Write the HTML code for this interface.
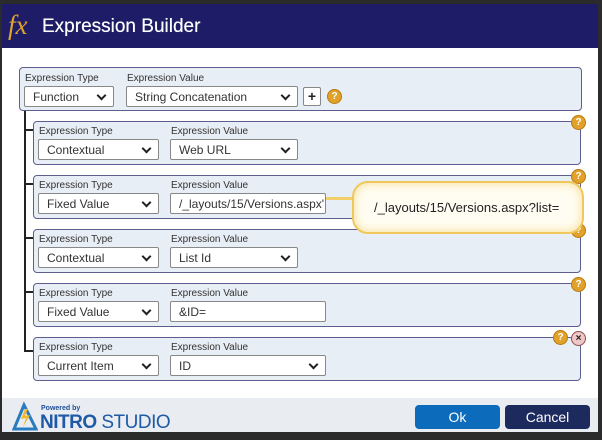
<!DOCTYPE html><html><head><style>
*{box-sizing:border-box;margin:0;padding:0}
body{width:602px;height:440px;background:#2b2b2b;font-family:"Liberation Sans",Arial,sans-serif;position:relative;overflow:hidden}
.dlg{position:absolute;left:2px;top:4px;width:596px;height:428px;background:#fff}
.title{position:absolute;left:0;top:0;width:596px;height:44px;background:#1e1c66;color:#fff;font-size:19px}
.title .fx{position:absolute;left:6px;top:6px;font-family:"Liberation Serif",serif;font-style:italic;color:#e0a52a;font-size:27px}
.title .t{position:absolute;left:40px;top:12px;font-weight:500;text-shadow:0 0 0.4px #fff}
.p{position:absolute;background:#e8eef5;border:1.5px solid #5e5e8e;border-radius:4px}
.lab{position:absolute;font-size:10px;color:#333}
.sel{position:absolute;height:21px;background:#fff;border:1px solid #888;border-radius:2px;font-size:12px;color:#333;padding:3px 0 0 8px}
.sel.d::after{content:"";position:absolute;right:8px;top:5px;width:5px;height:5px;border-right:2px solid #222;border-bottom:2px solid #222;transform:rotate(45deg)}
.q{position:absolute;width:15px;height:15px;border-radius:50%;background:#e2a22a;border:1px solid #b77a10;color:#fff;font-size:10px;font-weight:bold;text-align:center;line-height:13px}
.x{position:absolute;width:15px;height:15px;border-radius:50%;background:#f0c6c6;border:1px solid #8a5050;color:#222;font-size:10px;font-weight:bold;text-align:center;line-height:13px}
.ln{position:absolute;background:#222}
.foot{position:absolute;left:2px;top:398px;width:596px;height:34px;background:#e9ecf0}
.btn{position:absolute;top:405px;height:24px;border-radius:4px;color:#fff;font-size:14px;text-align:center;line-height:24px}
</style></head><body>
<div class="dlg">
<div class="title"><span class="fx">fx</span><span class="t">Expression Builder</span></div>
</div>
<div class="ln" style="left:24px;top:110px;width:2px;height:242px"></div>
<div class="ln" style="left:24px;top:129px;width:10px;height:2px"></div>
<div class="ln" style="left:24px;top:183px;width:10px;height:2px"></div>
<div class="ln" style="left:24px;top:237px;width:10px;height:2px"></div>
<div class="ln" style="left:24px;top:291px;width:10px;height:2px"></div>
<div class="ln" style="left:24px;top:350px;width:10px;height:2px"></div>

<div class="p" style="left:19px;top:67px;width:563px;height:44px"></div>
<div class="lab" style="left:25px;top:73px">Expression Type</div>
<div class="lab" style="left:127px;top:73px">Expression Value</div>
<div class="sel d" style="left:24px;top:86px;width:90px">Function</div>
<div class="sel d" style="left:126px;top:86px;width:172px">String Concatenation</div>
<div class="sel" style="left:303px;top:87px;width:18px;height:19px;padding:0;text-align:center;font-weight:bold;font-size:14px;line-height:16px;color:#222">+</div>
<div class="q" style="left:327px;top:89px">?</div>

<div class="p" style="left:33px;top:121px;width:548px;height:44px"></div>
<div class="lab" style="left:39px;top:126px">Expression Type</div><div class="lab" style="left:171px;top:126px">Expression Value</div>
<div class="sel d" style="left:38px;top:139px;width:121px">Contextual</div>
<div class="sel d" style="left:170px;top:139px;width:128px">Web URL</div>
<div class="q" style="left:571px;top:115px">?</div>

<div class="p" style="left:33px;top:175px;width:548px;height:44px"></div>
<div class="lab" style="left:39px;top:180px">Expression Type</div><div class="lab" style="left:171px;top:180px">Expression Value</div>
<div class="sel d" style="left:38px;top:193px;width:121px">Fixed Value</div>
<div class="sel" style="left:170px;top:193px;width:156px;overflow:hidden;white-space:nowrap">/_layouts/15/Versions.aspx'</div>
<div class="q" style="left:571px;top:169px">?</div>

<div class="p" style="left:33px;top:229px;width:548px;height:44px"></div>
<div class="lab" style="left:39px;top:234px">Expression Type</div><div class="lab" style="left:171px;top:234px">Expression Value</div>
<div class="sel d" style="left:38px;top:247px;width:121px">Contextual</div>
<div class="sel d" style="left:170px;top:247px;width:128px">List Id</div>
<div class="q" style="left:571px;top:223px">?</div>

<div class="p" style="left:33px;top:283px;width:548px;height:44px"></div>
<div class="lab" style="left:39px;top:288px">Expression Type</div><div class="lab" style="left:171px;top:288px">Expression Value</div>
<div class="sel d" style="left:38px;top:301px;width:121px">Fixed Value</div>
<div class="sel" style="left:170px;top:301px;width:156px">&amp;ID=</div>
<div class="q" style="left:571px;top:277px">?</div>

<div class="p" style="left:33px;top:337px;width:548px;height:44px"></div>
<div class="lab" style="left:39px;top:342px">Expression Type</div><div class="lab" style="left:171px;top:342px">Expression Value</div>
<div class="sel d" style="left:38px;top:355px;width:121px">Current Item</div>
<div class="sel d" style="left:170px;top:355px;width:156px">ID</div>
<div class="q" style="left:553px;top:330px">?</div>
<div class="x" style="left:571px;top:331px">×</div>

<div style="position:absolute;left:326px;top:197px;width:30px;height:3px;background:#f3cf6a"></div>
<div style="position:absolute;left:352px;top:181px;width:232px;height:53px;background:#fffdf2;border:2px solid #f0c75a;border-radius:16px;box-shadow:inset 0 0 10px #f8dc8e;font-size:13px;color:#222;padding:17px 0 0 20px">/_layouts/15/Versions.aspx?list=</div>

<div class="foot"></div>
<svg style="position:absolute;left:12px;top:401px" width="26" height="30" viewBox="0 0 26 30"><path d="M2 28 L12 4 L24 28 Z" fill="none" stroke="#2a7bc0" stroke-width="3"/><path d="M13 8 L9 18 L14 17 L11 26 L18 14 L13 15 L16 8 Z" fill="#f3b92b"/></svg>
<div style="position:absolute;left:41px;top:405px;font-size:7px;font-weight:bold;color:#1f4f9a">Powered by</div>
<div style="position:absolute;left:40px;top:412px;font-size:19px;color:#1f5aa6;letter-spacing:-0.5px"><b>NITRO</b> STUDIO</div>
<div class="btn" style="left:415px;width:85px;background:#0c6cbb">Ok</div>
<div class="btn" style="left:505px;width:85px;background:#1c2a5e">Cancel</div>
</body></html>
